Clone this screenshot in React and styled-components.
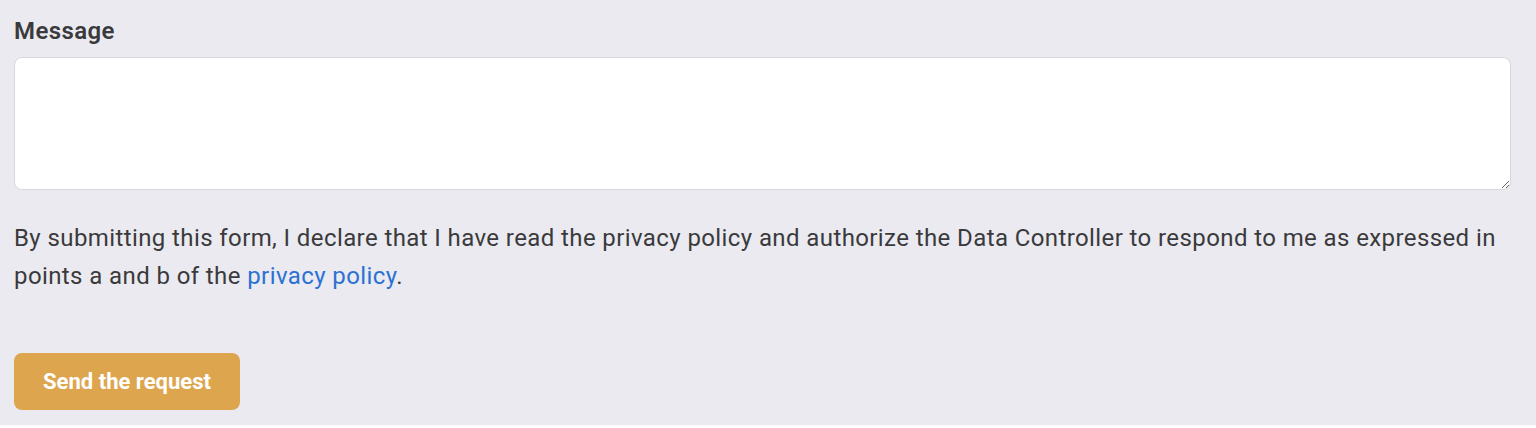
import React from "react";
import styled, { createGlobalStyle } from "styled-components";

const GlobalStyle = createGlobalStyle`
  html, body {
    margin: 0;
    padding: 0;
    background: #ffffff;
  }
  * {
    box-sizing: border-box;
  }
`;

export default function App() {
  return (
    <>
      <GlobalStyle />
      <Section>
        <Form onSubmit={(e) => e.preventDefault()}>
          <Label htmlFor="message">Message</Label>
          <TextArea id="message" name="message" />
          <Notice>
            By submitting this form, I declare that I have read the privacy
            policy and authorize the Data Controller to respond to me as
            expressed in points a and b of the{" "}
            <PolicyLink href="#privacy">privacy policy</PolicyLink>.
          </Notice>
          <SubmitButton type="submit">Send the request</SubmitButton>
        </Form>
      </Section>
    </>
  );
}

const Section = styled.section`
  background: #eaeaf0;
  height: 425px;
  padding: 14px 25px 0 14px;
`;

const Form = styled.form`
  display: flex;
  flex-direction: column;
  align-items: flex-start;
`;

const Label = styled.label`
  font-family: Roboto, "Liberation Sans", sans-serif;
  font-weight: 600;
  font-size: 24px;
  line-height: 34px;
  letter-spacing: 0.4px;
  color: #3a3a3c;
`;

const TextArea = styled.textarea`
  width: 100%;
  height: 133px;
  margin-top: 9px;
  border: 1px solid #d8d8de;
  border-radius: 8px;
  background: #ffffff;
  outline: none;
  resize: vertical;
  font-family: Roboto, "Liberation Sans", sans-serif;
  font-size: 22px;
`;

const Notice = styled.p`
  margin: 29px 0 0;
  font-family: Roboto, "Liberation Sans", sans-serif;
  font-weight: 400;
  font-size: 24px;
  line-height: 38px;
  letter-spacing: 0.4px;
  color: #3a3a3c;
`;

const PolicyLink = styled.a`
  color: #2c72d2;
  text-decoration: none;
`;

const SubmitButton = styled.button`
  margin-top: 58px;
  width: 226px;
  height: 57px;
  border: none;
  border-radius: 8px;
  background: #dda54e;
  color: #ffffff;
  font-family: Roboto, "Liberation Sans", sans-serif;
  font-weight: 700;
  font-size: 22px;
  cursor: pointer;
`;
